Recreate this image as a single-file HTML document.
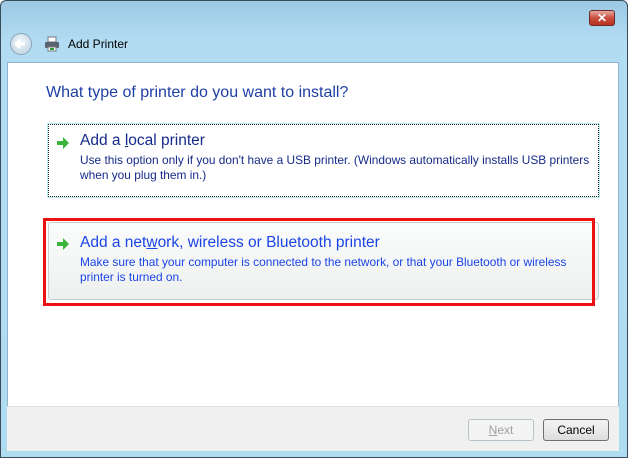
<!DOCTYPE html>
<html><head><meta charset="utf-8"><style>
*{margin:0;padding:0;box-sizing:border-box}
body{width:628px;height:458px;overflow:hidden;font-family:"Liberation Sans",sans-serif;background:#fff}
.frame{position:absolute;left:0;top:0;width:628px;height:458px;border:1px solid #3a4a5a;border-radius:6px 6px 0 0;background:linear-gradient(#9cc8e4,#b2dcf2 40px,#b0dcf2);}
.content{position:absolute;left:7px;top:62px;width:612px;height:346px;background:#fff;border:1px solid #8fb5cc;border-bottom:none}
.footer{position:absolute;left:7px;top:406px;width:612px;height:45px;background:#f0f0f0;border-top:1px solid #dfdfdf}
.close{position:absolute;left:589px;top:10px;width:26px;height:16px;border:1px solid #6b2a28;border-radius:3px;background:linear-gradient(#e8a9a0,#c9503f 50%,#b8301e);color:#fff;font-size:12px;font-weight:bold;text-align:center;line-height:14px}
.back{position:absolute;left:10px;top:33px;width:22px;height:22px;border-radius:50%;border:1px solid #8aa4bb;background:radial-gradient(circle at 50% 35%,#eef5fb,#bcd0e0)}
.title{position:absolute;left:68px;top:37px;font-size:12px;color:#000}
h1{position:absolute;left:46px;top:84px;font-size:16px;font-weight:normal;color:#1e3fa6}
.opt{position:absolute;left:48px;width:551px;color:#152a8a}
.opt .h{position:absolute;left:31px;font-size:15.5px}
.opt .d{position:absolute;left:31px;font-size:11.9px;line-height:15px;white-space:nowrap}
.arrow{position:absolute;left:7px;width:14px;height:12px}
.btn{position:absolute;top:419px;width:66px;height:22px;border:1px solid #707070;border-radius:3px;font-size:12px;text-align:center;line-height:20px;background:linear-gradient(#f2f2f2,#ebebeb 50%,#dcdcdc)}
</style></head><body>
<div class="frame"></div>
<div class="close">✕</div>
<div class="back"><svg width="20" height="20" viewBox="0 0 20 20"><path d="M14 10H6M9 6L5 10L9 14" stroke="#fff" stroke-width="3" fill="none"/></svg></div>
<svg style="position:absolute;left:44px;top:36px" width="16" height="16" viewBox="0 0 16 16"><rect x="4" y="1" width="8" height="5" fill="#fff" stroke="#777"/><rect x="1" y="6" width="14" height="6" rx="1" fill="#5a6470"/><rect x="4" y="11" width="8" height="4" fill="#fff" stroke="#777"/><rect x="6" y="12" width="4" height="2" fill="#2c9a3a"/></svg>
<div class="title">Add Printer</div>
<div class="content"></div>
<div class="footer"></div>
<h1>What type of printer do you want to install?</h1>
<div class="opt" style="top:124px;height:73px;border:1px dotted #222;outline:1px solid #b8ecee">
<svg class="arrow" style="top:12px" viewBox="0 0 14 12"><path d="M1 4H7V0L13 6L7 12V8H1Z" fill="#3cb43c"/></svg>
<div class="h" style="top:7px">Add a <u>l</u>ocal printer</div>
<div class="d" style="top:28px">Use this option only if you don't have a USB printer. (Windows automatically installs USB printers<br>when you plug them in.)</div>
</div>
<div class="opt" style="top:222px;height:78px;border:1px solid #c4d0d4;border-radius:3px;background:linear-gradient(#fbfcfc,#eef0f0);color:#1a44e6">
<svg class="arrow" style="top:15px" viewBox="0 0 14 12"><path d="M1 4H7V0L13 6L7 12V8H1Z" fill="#3cb43c"/></svg>
<div class="h" style="top:11px">Add a net<u>w</u>ork, wireless or Bluetooth printer</div>
<div class="d" style="top:32px">Make sure that your computer is connected to the network, or that your Bluetooth or wireless<br>printer is turned on.</div>
</div>
<div style="position:absolute;left:43px;top:218px;width:552px;height:88px;border:3px solid #ee1111"></div>
<div class="btn" style="left:468px;color:#a0a0a0;border-color:#b8c4cc;background:#f4f4f4"><u>N</u>ext</div>
<div class="btn" style="left:543px;color:#000">Cancel</div>
</body></html>
